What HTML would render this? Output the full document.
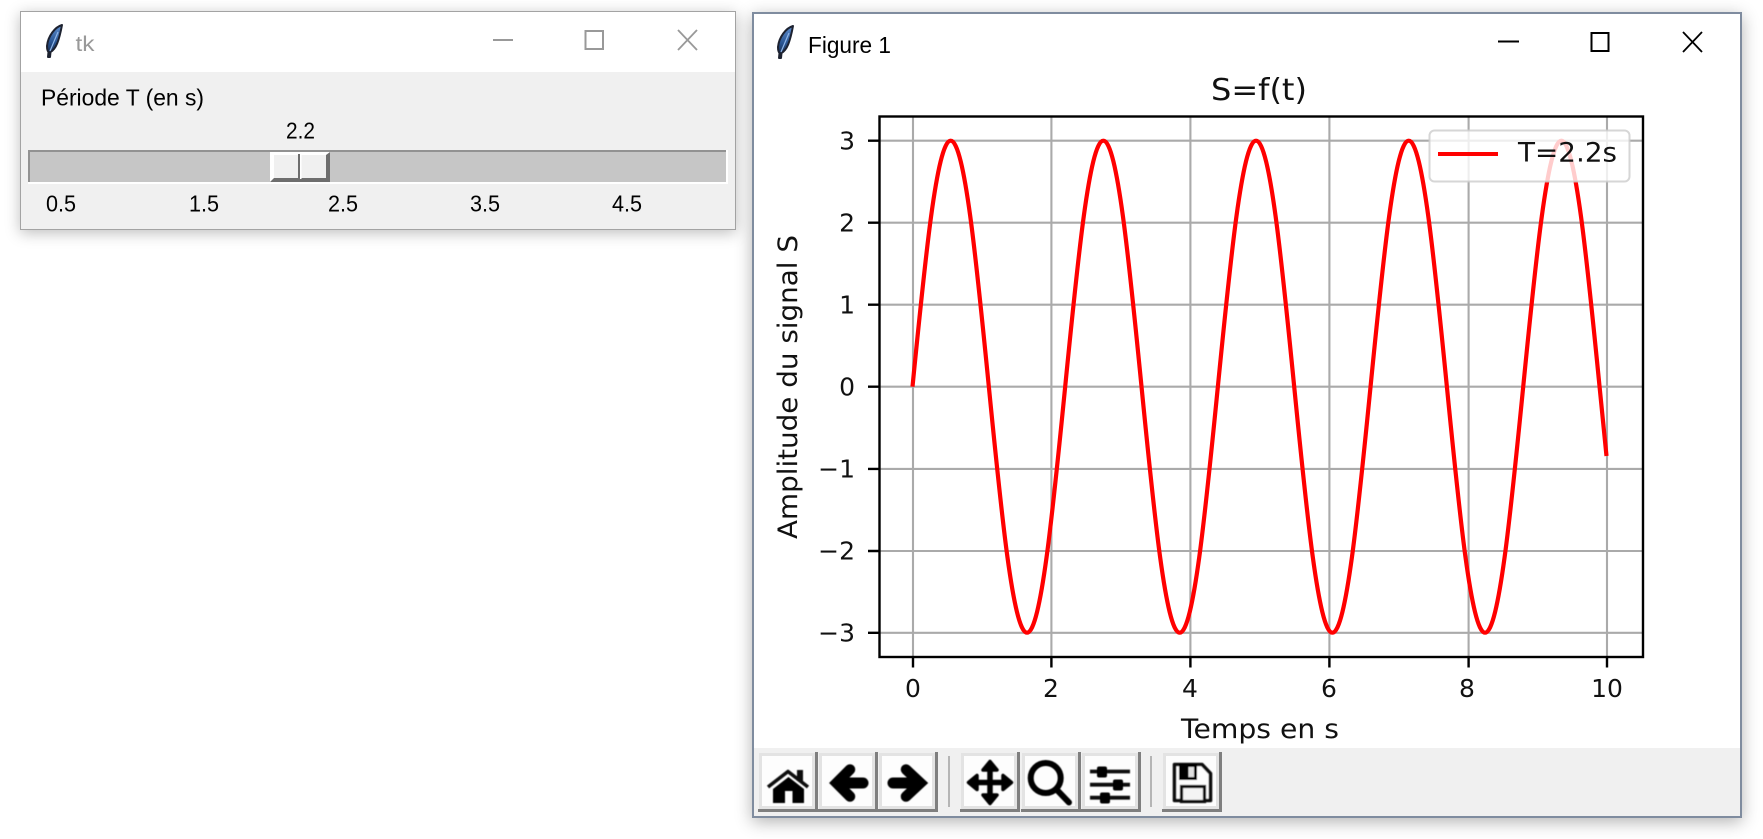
<!DOCTYPE html>
<html><head><meta charset="utf-8"><title>tk / Figure 1</title>
<style>
html,body{margin:0;padding:0;background:#fff;width:1763px;height:839px;overflow:hidden}
.w{position:absolute;box-sizing:border-box}
#w1{left:20px;top:11px;width:716px;height:219px;background:#f0f0f0;border:1px solid #a3a3a3;box-shadow:0 3px 14px rgba(0,0,0,.26)}
#w2{left:752px;top:12px;width:990px;height:806px;background:#fff;border:2px solid #7f8c9f;box-shadow:0 4px 16px rgba(0,0,0,.30)}
svg{position:absolute;left:0;top:0}
.ui{font-family:"Liberation Sans",sans-serif;fill:#000}
.mp{font-family:"DejaVu Sans",sans-serif;fill:#111}
</style></head><body>
<div class="w" id="w1"></div>
<div class="w" id="w2"></div>
<svg width="1763" height="839" viewBox="0 0 1763 839" xmlns="http://www.w3.org/2000/svg">
<defs>
<linearGradient id="fe" x1="0" y1="0" x2="0" y2="1"><stop offset="0" stop-color="#5f8fd0"/><stop offset=".55" stop-color="#27528f"/><stop offset="1" stop-color="#141d33"/></linearGradient>
<filter id="soft" x="-5%" y="-5%" width="110%" height="110%"><feGaussianBlur stdDeviation="0.55"/></filter>
<g id="feather">
<path d="M17,0 C10,2 3,11 2,21 C2,24 2.5,26 3.5,27 L3,32 L5,32 L5.5,27 C11,24 14,16 17,0 Z" fill="url(#fe)" stroke="#1d2230" stroke-width="2" stroke-linejoin="round"/>
<path d="M13,7 L5,26" stroke="#8fb6e8" stroke-width="1.2" fill="none"/>
</g>
<g id="btn">
<rect x="0" y="0" width="60" height="60" fill="#7f7f7f"/>
<rect x="0" y="0" width="57" height="57" fill="#f0f0f0"/>
<rect x="1" y="1" width="56" height="56" fill="#e3e3e3"/>
<rect x="4" y="4" width="50" height="50" fill="#fdfdfd"/>
</g>
</defs>

<!-- tk window -->
<rect x="21" y="12" width="714" height="60" fill="#fff"/>
<use href="#feather" x="45" y="25"/>
<text class="ui" x="75.5" y="51" font-size="21" style="fill:#999" textLength="19" lengthAdjust="spacingAndGlyphs">tk</text>
<path d="M493,40H513" stroke="#999" stroke-width="2"/>
<rect x="585.5" y="31" width="17.5" height="18" fill="none" stroke="#999" stroke-width="2"/>
<path d="M678,30L697,50M697,30L678,50" stroke="#999" stroke-width="1.8"/>
<text class="ui" x="41" y="105.5" font-size="23" textLength="163" lengthAdjust="spacingAndGlyphs">Période T (en s)</text>
<text class="ui" x="286" y="138.5" font-size="23" textLength="29" lengthAdjust="spacingAndGlyphs">2.2</text>

<rect x="28" y="150" width="700" height="34" fill="#fff"/>
<rect x="28" y="150" width="698" height="32" fill="#c6c6c6"/>
<rect x="28" y="150" width="698" height="2" fill="#929292"/>
<rect x="28" y="150" width="2" height="32" fill="#929292"/>
<rect x="270" y="152" width="60" height="30" fill="#6e6e6e"/>
<path d="M270,152H330L326,155H274V178L270,182Z" fill="#fff"/>
<rect x="274" y="155" width="52" height="23" fill="#f0f0f0"/>
<rect x="298" y="154" width="2" height="25" fill="#6e6e6e"/>
<rect x="300" y="154" width="1.5" height="25" fill="#fff"/>

<g font-size="23">
<text class="ui" x="46" y="211.5" textLength="30" lengthAdjust="spacingAndGlyphs">0.5</text>
<text class="ui" x="189" y="211.5" textLength="30" lengthAdjust="spacingAndGlyphs">1.5</text>
<text class="ui" x="328" y="211.5" textLength="30" lengthAdjust="spacingAndGlyphs">2.5</text>
<text class="ui" x="470" y="211.5" textLength="30" lengthAdjust="spacingAndGlyphs">3.5</text>
<text class="ui" x="612" y="211.5" textLength="30" lengthAdjust="spacingAndGlyphs">4.5</text>
</g>

<!-- Figure window title bar -->
<use href="#feather" x="776" y="26"/>
<text class="ui" x="808" y="53" font-size="23" textLength="83" lengthAdjust="spacingAndGlyphs">Figure 1</text>
<path d="M1498,41.5H1519" stroke="#000" stroke-width="2"/>
<rect x="1591.5" y="33" width="17" height="18" fill="none" stroke="#000" stroke-width="2"/>
<path d="M1683,32L1702,52M1702,32L1683,52" stroke="#000" stroke-width="1.8"/>

<!-- Plot -->
<text class="mp" x="1211" y="100" font-size="30" textLength="96" lengthAdjust="spacingAndGlyphs">S=f(t)</text>
<g stroke="#aaa" stroke-width="2.1" fill="none">
<path d="M913,117V657M1051.4,117V657M1190.4,117V657M1329.4,117V657M1468.6,117V657M1607,117V657"/>
<path d="M879,140.7H1643M879,222.7H1643M879,304.7H1643M879,386.7H1643M879,468.9H1643M879,551H1643M879,632.8H1643"/>
</g>
<path fill="none" stroke="#ff0000" stroke-width="4.2" stroke-linejoin="round" d="M912.5,386.7
c12.45,-126 24.36,-246 38.17,-246 c13.81,0 25.72,120 38.17,246 c12.45,126 24.36,246 38.17,246 c13.81,0 25.72,-120 38.17,-246
c12.45,-126 24.36,-246 38.17,-246 c13.81,0 25.72,120 38.17,246 c12.45,126 24.36,246 38.17,246 c13.81,0 25.72,-120 38.17,-246
c12.45,-126 24.36,-246 38.17,-246 c13.81,0 25.72,120 38.17,246 c12.45,126 24.36,246 38.17,246 c13.81,0 25.72,-120 38.17,-246
c12.45,-126 24.36,-246 38.17,-246 c13.81,0 25.72,120 38.17,246 c12.45,126 24.36,246 38.17,246 c13.81,0 25.72,-120 38.17,-246
c12.45,-126 24.36,-246 38.17,-246 c13.81,0 25.72,120 38.17,246 c2.31,24 4.63,47 6.94,69.3"/>
<rect x="879.5" y="116.5" width="763.5" height="540.5" fill="none" stroke="#000" stroke-width="2.4"/>
<g stroke="#000" stroke-width="2.4" fill="none">
<path d="M913,657V667.5M1051.4,657V667.5M1190.4,657V667.5M1329.4,657V667.5M1468.6,657V667.5M1607,657V667.5"/>
<path d="M868,140.7H879M868,222.7H879M868,304.7H879M868,386.7H879M868,468.9H879M868,551H879M868,632.8H879"/>
</g>
<rect x="1429.5" y="130.5" width="200" height="51" rx="5" ry="5" fill="#fff" fill-opacity=".8" stroke="#ccc" stroke-opacity=".8" stroke-width="2"/>
<path d="M1438,154H1498" stroke="#ff0000" stroke-width="4"/>
<text class="mp" x="1518" y="161.7" font-size="27" textLength="99" lengthAdjust="spacingAndGlyphs">T=2.2s</text>

<g font-size="25" text-anchor="end">
<text class="mp" x="855" y="149.5">3</text>
<text class="mp" x="855" y="231.5">2</text>
<text class="mp" x="855" y="313.5">1</text>
<text class="mp" x="855" y="395.5">0</text>
<text class="mp" x="855" y="477.5">−1</text>
<text class="mp" x="855" y="559.5">−2</text>
<text class="mp" x="855" y="641.5">−3</text>
</g>
<g font-size="25" text-anchor="middle">
<text class="mp" x="913" y="697">0</text>
<text class="mp" x="1051" y="697">2</text>
<text class="mp" x="1190" y="697">4</text>
<text class="mp" x="1329" y="697">6</text>
<text class="mp" x="1467" y="697">8</text>
<text class="mp" x="1607" y="697">10</text>
</g>
<text class="mp" x="1181" y="738" font-size="27" textLength="158" lengthAdjust="spacingAndGlyphs">Temps en s</text>
<text class="mp" transform="translate(797,539) rotate(-90)" font-size="27" textLength="304" lengthAdjust="spacingAndGlyphs">Amplitude du signal S</text>

<!-- Toolbar -->
<rect x="754" y="748" width="986" height="68" fill="#f0f0f0"/>
<use href="#btn" x="758" y="752"/>
<use href="#btn" x="818" y="752"/>
<use href="#btn" x="878" y="752"/>
<use href="#btn" x="960" y="752"/>
<use href="#btn" x="1021" y="752"/>
<use href="#btn" x="1081" y="752"/>
<use href="#btn" x="1162" y="752"/>
<rect x="948" y="756" width="2" height="51" fill="#b5b5b5"/>
<rect x="1150" y="756" width="2" height="51" fill="#b5b5b5"/>

<g filter="url(#soft)">
<!-- home -->
<path d="M768,787L788,771.5L808,787" fill="none" stroke="#111" stroke-width="3.6" stroke-linejoin="round"/>
<rect x="797" y="770" width="6" height="11" fill="#111"/>
<path d="M773,789L788.5,777L804,789V803H792.5V791H785V803H773Z" fill="#000"/>
<!-- back -->
<path d="M850,769.5L836.5,783L850,796.5" fill="none" stroke="#000" stroke-width="10.5" stroke-linecap="round" stroke-linejoin="miter"/>
<path d="M840,783H863" stroke="#000" stroke-width="11" stroke-linecap="round"/>
<!-- forward -->
<path d="M906,769.5L920.5,783L906,796.5" fill="none" stroke="#000" stroke-width="10.5" stroke-linecap="round" stroke-linejoin="miter"/>
<path d="M893,783H916" stroke="#000" stroke-width="11" stroke-linecap="round"/>
<!-- move -->
<path d="M990,765V800M972,782.5H1008" stroke="#000" stroke-width="5.5"/>
<path d="M990,761.5L997,770H983ZM990,803.5L997,795H983ZM968.5,782.5L977,775.5V789.5ZM1011.5,782.5L1003,775.5V789.5Z" fill="#000" stroke="#000" stroke-width="3.5" stroke-linejoin="round"/>
<!-- zoom -->
<circle cx="1045.7" cy="778" r="15" fill="none" stroke="#000" stroke-width="6"/>
<path d="M1057,790L1069,802.5" stroke="#000" stroke-width="6" stroke-linecap="round"/>
<!-- config -->
<path d="M1090,771.5H1130M1090,784.7H1130M1090,797.7H1130" stroke="#111" stroke-width="3.8"/>
<rect x="1097" y="766.5" width="10" height="11" rx="2" fill="#000"/>
<rect x="1113" y="779.5" width="10" height="11" rx="2" fill="#000"/>
<rect x="1100" y="792.5" width="10" height="11" rx="2" fill="#000"/>
<!-- save -->
<path d="M1174.5,764.5H1202L1210.5,773.5V800.5H1174.5Z" fill="#fdfdfd" stroke="#111" stroke-width="3.6" stroke-linejoin="round"/>
<rect x="1179" y="764" width="18" height="16" fill="#000"/>
<rect x="1188.5" y="767" width="5.5" height="10" fill="#e0e0e0"/>
<rect x="1181.5" y="786.5" width="23" height="15" fill="#f4f4f4" stroke="#111" stroke-width="3.2"/>
</g>
</svg>
</body></html>
